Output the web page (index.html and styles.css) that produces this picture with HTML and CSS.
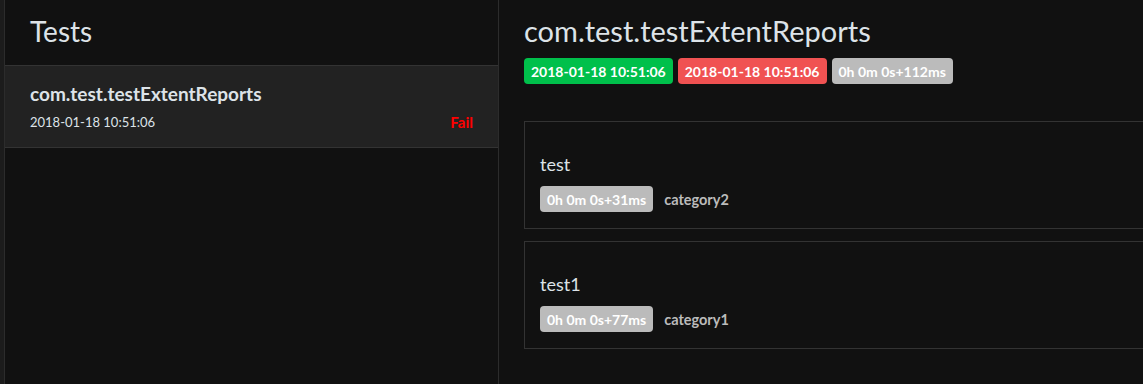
FILE: index.html
```html
<!DOCTYPE html>
<html lang="en">
<head>
    <meta charset="UTF-8">
    <title>Extent Report</title>
    <link rel="stylesheet" href="styles.css">
</head>
<body>
    <div class="report">
        <aside class="test-list">
            <h3 class="list-title">Tests</h3>
            <ul class="tests">
                <li class="test-item">
                    <span class="test-name">com.test.testExtentReports</span>
                    <div class="test-meta">
                        <span class="test-time">2018-01-18 10:51:06</span>
                        <span class="test-status fail">Fail</span>
                    </div>
                </li>
            </ul>
        </aside>

        <main class="test-detail">
            <h4 class="detail-title">com.test.testExtentReports</h4>
            <div class="badges">
                <span class="badge success">2018-01-18 10:51:06</span>
                <span class="badge danger">2018-01-18 10:51:06</span>
                <span class="badge default">0h 0m 0s+112ms</span>
            </div>

            <div class="node">
                <div class="node-name">test</div>
                <div class="node-meta">
                    <span class="badge default">0h 0m 0s+31ms</span>
                    <span class="category">category2</span>
                </div>
            </div>

            <div class="node">
                <div class="node-name">test1</div>
                <div class="node-meta">
                    <span class="badge default">0h 0m 0s+77ms</span>
                    <span class="category">category1</span>
                </div>
            </div>
        </main>
    </div>
</body>
</html>
```

FILE: styles.css
```css
/* Karanlık tema - test raporu */
body, html {
    margin: 0;
    padding: 0;
    height: 100%;
    overflow: hidden;
    background-color: #111;
    font-family: Lato, "Open Sans", sans-serif;
    color: #dde3e8;
}

.report {
    display: flex;
    height: 100%;
    width: 1400px;
    border-left: 4px solid #1c1c1c;
}

.test-list {
    width: 493px;
    flex-shrink: 0;
    border-left: 1px solid #2c2c2c;
    border-right: 1px solid #2c2c2c;
    background-color: #111;
}

.list-title {
    margin: 0;
    height: 65px;
    box-sizing: border-box;
    padding: 14px 0 0 25px;
    font-size: 28px;
    font-weight: normal;
}

.tests {
    list-style: none;
    margin: 0;
    padding: 0;
}

.test-item {
    background-color: #222;
    border-top: 1px solid #333;
    border-bottom: 1px solid #333;
    padding: 16px 25px 16px 25px;
}

.test-name {
    font-size: 19px;
    font-weight: bold;
}

.test-meta {
    display: flex;
    justify-content: space-between;
    align-items: center;
    margin-top: 8px;
}

.test-time {
    font-size: 13px;
}

.test-status {
    font-size: 15px;
    font-weight: bold;
}

.fail {
    color: #ff0000;
}

.test-detail {
    flex: 1;
    padding: 13px 0 0 25px;
}

.detail-title {
    margin: 0;
    font-size: 29px;
    font-weight: normal;
}

.badges {
    display: flex;
    gap: 5px;
    margin-top: 10px;
}

.badge {
    display: inline-block;
    padding: 5px 7px 4px 7px;
    line-height: 17px;
    border-radius: 4px;
    font-size: 14px;
    font-weight: bold;
    color: #fff;
}

.success {
    background-color: #00c04b;
}

.danger {
    background-color: #f05252;
}

.default {
    background-color: #bbb;
}

.node {
    border: 1px solid #333;
    margin-top: 37px;
    padding: 31px 15px 16px 15px;
}

.node + .node {
    margin-top: 12px;
}

.node-name {
    font-size: 18px;
}

.node-meta {
    display: flex;
    align-items: center;
    gap: 11px;
    margin-top: 11px;
}

.category {
    font-size: 14.5px;
    font-weight: bold;
    color: #bbb;
}
```
